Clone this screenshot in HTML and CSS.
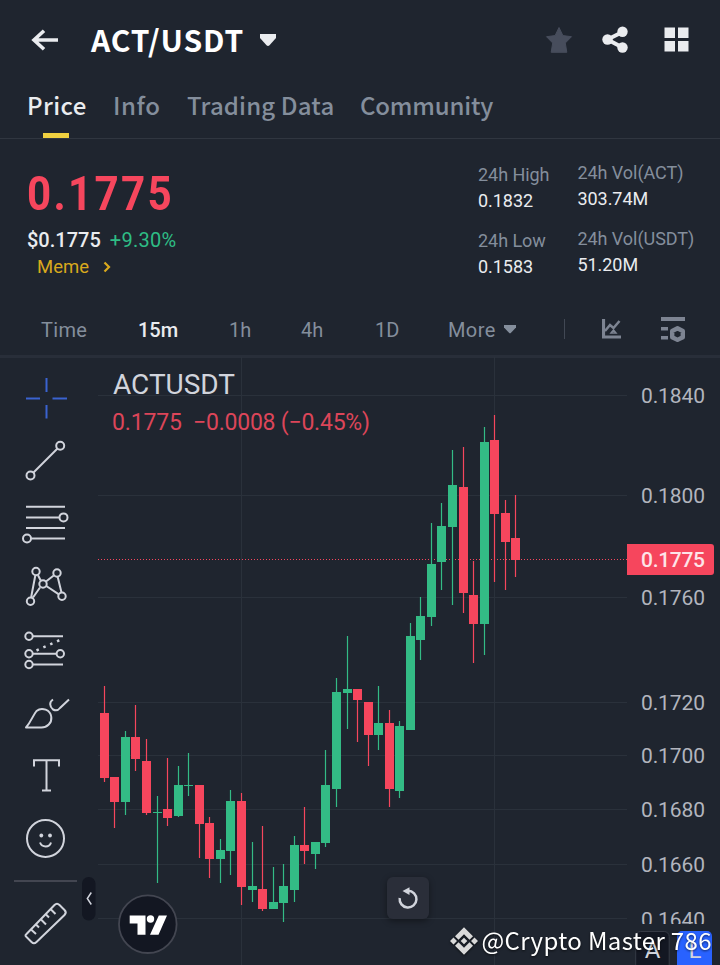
FILE: index.html
```html
<!DOCTYPE html>
<html lang="en">
<head>
<meta charset="utf-8">
<title>ACT/USDT</title>
<link rel="stylesheet" href="styles.css">
</head>
<body>
<div class="app">
  <header class="topbar">
    <svg class="back" width="28" height="24" viewBox="0 0 28 24"><path d="M27 12H3M13 2.800L3 12L13 21.200" fill="none" stroke="#eaecef" stroke-width="3.600"/></svg>
    <h1 class="pair">ACT/USDT</h1>
    <svg class="caret" width="16" height="13" viewBox="0 0 16 13"><path d="M0 0H16V4L9.500 11.300Q8 12.800 6.500 11.300L0 4Z" fill="#eaecef"/></svg>
    <div class="actions">
      <svg width="28" height="28" viewBox="0 0 28 28"><path d="M14 1.500L17.900 9.600L26.500 10.700L20.300 17L21.800 26.300H6.200L7.700 17L1.500 10.700L10.100 9.600Z" fill="#474d5c" stroke="#474d5c" stroke-linejoin="round"/></svg>
      <svg width="28" height="28" viewBox="0 0 28 28"><path d="M21.500 6L6.500 13.500L21.500 21.500" fill="none" stroke="#eaecef" stroke-width="4"/><circle cx="21.500" cy="5.800" r="5.200" fill="#eaecef"/><circle cx="6.500" cy="13.500" r="5.200" fill="#eaecef"/><circle cx="21.500" cy="21.500" r="5.200" fill="#eaecef"/></svg>
      <svg width="26" height="26" viewBox="0 0 26 26"><path d="M.5 .5h10.500v10.500H.5zM14 .5H24.500v10.500H14zM.5 14h10.500V24.500H.5zM14 14H24.500V24.500H14z" fill="#eaecef"/></svg>
    </div>
  </header>

  <nav class="tabs">
    <span class="tab tab-active">Price</span><span class="tab tab-info">Info</span><span class="tab tab-data">Trading Data</span><span class="tab tab-community">Community</span>
  </nav>

  <section class="summary">
    <div class="quote">
      <div class="last">0.1775</div>
      <div class="fiat"><span class="usd">$0.1775</span><span class="change">+9.30%</span></div>
      <div class="tag"><span>Meme</span><svg width="8" height="12" viewBox="0 0 8 12"><path d="M1.500 1.500L6 6L1.500 10.500" fill="none" stroke="#d9a91d" stroke-width="2.200"/></svg></div>
    </div>
    <div class="stats">
      <div class="stat-col stat-price">
        <div class="stat"><span class="label label-high">24h High</span><span class="value">0.1832</span></div>
        <div class="stat"><span class="label label-low">24h Low</span><span class="value">0.1583</span></div>
      </div>
      <div class="stat-col">
        <div class="stat"><span class="label label-act">24h Vol(ACT)</span><span class="value">303.74M</span></div>
        <div class="stat"><span class="label label-usdt">24h Vol(USDT)</span><span class="value">51.20M</span></div>
      </div>
    </div>
  </section>

  <div class="intervals">
    <span class="int int-time">Time</span><span class="int int-on">15m</span><span class="int int-1h">1h</span><span class="int int-4h">4h</span><span class="int int-1d">1D</span><span class="int int-more">More</span>
    <svg class="more-caret" width="12" height="9" viewBox="0 0 12 9"><path d="M0 0H12V2.500L7 7.700Q6 8.700 5 7.700L0 2.500Z" fill="#848e9c"/></svg>
    <i class="divider"></i>
    <svg class="indicator" width="20" height="20" viewBox="0 0 20 20"><g fill="none" stroke="#7d8492"><path d="M1.500 0V18H19" stroke-width="3.200"/><path d="M3 12L8 6L11.500 9L17.500 2" stroke-width="2.500"/><path d="M9 14L11.500 11L14 14Z" stroke-width="1.500"/></g></svg>
    <svg class="settings" width="26" height="26" viewBox="0 0 26 26"><path d="M1 1h24v4H1zM1 11h7v3.500H1zM1 20h7v3.500H1z" fill="#7d8492"/><path d="M17.500 12.300L22.800 15V21.200L17.500 23.900L12.200 21.200V15Z" fill="none" stroke="#7d8492" stroke-width="4.400" stroke-linejoin="round"/></svg>
  </div>

  <main class="chart">
    <svg class="tools" width="98" height="608" viewBox="0 357 98 608">
      <path d="M46.500 378V392M46.500 405V418.500M26 398.500H40M52.500 398.500H67" stroke="#3a63d0" stroke-width="2"/>
      <g fill="none" stroke="#d1d4dc" stroke-width="2">
        <path d="M33.500 472.500L57.500 448.500"/><circle cx="60.200" cy="445.700" r="4"/><circle cx="30.500" cy="475.500" r="4"/>
        <path d="M26 506.700H65M26 517.400H59M26 528H65M31 538.500H65"/><circle cx="63.500" cy="517.400" r="4"/><circle cx="27" cy="538.500" r="4"/>
        <path d="M35.300 575.500L31.200 597M38 575.200L40.700 580.500M46 581.500L53.700 575.500M57.700 577L61.500 592.500M46.300 586L58.500 594.200M40 587.500L33 597.500"/><circle cx="36" cy="571.500" r="3.700"/><circle cx="57" cy="573" r="3.700"/><circle cx="43" cy="584" r="3.700"/><circle cx="30.500" cy="601.300" r="3.700"/><circle cx="62" cy="596.300" r="3.700"/>
        <path d="M33 636.300H63M33 653.800H56M33 664.500H63"/><circle cx="29" cy="636.300" r="3.700"/><circle cx="29" cy="653.800" r="3.700"/><circle cx="60.300" cy="653.800" r="3.700"/><circle cx="29" cy="664.500" r="3.700"/>
        <path d="M36.500 650.500L61 639.500" stroke-width="2.500" stroke-dasharray="2.500 5"/>
        <path d="M26 727.500C31 722 32.500 716 36.500 711C42 706.500 50.500 710 51.300 717C52 723 47 727.500 41.500 727.500Z" stroke-linejoin="round"/><path d="M53 699.500C49 702 49.500 706.500 53 709.500C56.500 711.300 58.500 710 60 708L69 699.500"/>
        <path d="M34 766.500V760.300H59V766.500M46.500 760.300V790.500M42 790.500H51"/>
        <circle cx="45.500" cy="838.500" r="18.500"/><path d="M40 842.500C42 847.800 49.500 847.800 51 842.500"/>
        <path d="M26.500 934L54.500 905Q57 902.500 59.500 905L64.500 910Q67 912.500 64.500 915L36.500 942Q34 944.500 31.500 942L26.500 937Q24.500 935.500 26.500 934ZM31 929.500L36 934M36 924.500L39 927.500M41 919.500L46 924.500M46 914.500L49 917.500M51 909.500L55.500 914"/>
      </g>
      <circle cx="41.300" cy="835.500" r="1.900" fill="#d1d4dc"/><circle cx="50" cy="835.500" r="1.900" fill="#d1d4dc"/>
      <path d="M14 881H77" stroke="#434651" stroke-width="2"/>
      <rect x="82" y="877" width="13.500" height="43.500" rx="6.500" fill="#131722"/>
      <path d="M91.300 892.500L87.300 898.500L91.300 904.500" fill="none" stroke="#d1d4dc" stroke-width="1.500"/>
    </svg>
    <svg class="plot" width="622" height="608" viewBox="98 357 622 608">
      <path class="grid" d="M98 395.500H627M98 495.500H627M98 597.500H627M98 702.500H627M98 755.500H627M98 809.500H627M98 864.500H627M98 918.500H627M241.500 357V965M494.500 357V965"/>
      <path class="current" d="M98 559.500H627"/>
      <path class="wick up" d="M125.500 731V815M157.500 796V883M178.500 766V817M188.500 753V796M220.500 839V883M230.500 790V875M252.500 842V902M273.500 867V909M283.500 864V922M294.500 836V902M315.500 842V869M325.500 750V847M336.500 678V807M347.500 636V729M378.500 686V750M399.500 721V798M410.500 623V730M420.500 597V660M431.500 523V626M441.500 503V590M452.500 450V605M484.500 427V655"/>
      <path class="wick down" d="M104.500 686V782M114.500 777V828M135.500 705V771M146.500 739V815M167.500 758V826M199.500 785V858M209.500 817V878M241.500 793V905M262.500 826V911M304.500 807V864M357.500 689V742M368.500 702V766M389.500 710V807M463.500 447V613M473.500 561V663M494.500 415V582M505.500 500V590M515.500 495V577"/>
      <path class="body up" d="M125.500 737V802M157.500 812V813M178.500 785V816M188.500 785V786M220.500 850V859M230.500 801V851M252.500 886V890M273.500 902V909M283.500 886V903M294.500 845V890M315.500 842V854M325.500 785V843M336.500 692V789M347.500 689V693M378.500 723V735M399.500 726V791M410.500 636V730M420.500 616V640M431.500 564V617M441.500 526V562M452.500 485V527M484.500 442V624"/>
      <path class="body down" d="M104.500 713V778M114.500 777V802M135.500 737V759M146.500 761V813M167.500 809V818M199.500 785V824M209.500 823V859M241.500 801V887M262.500 889V909M304.500 845V851M357.500 689V700M368.500 702V735M389.500 723V789M463.500 487V593M473.500 595V624M494.500 440V514M505.500 513V542M515.500 538V560"/>
      <text class="symbol" x="113" y="394" textLength="122">ACTUSDT</text>
      <text class="delta" x="112" y="430" textLength="70">0.1775</text>
      <text class="delta" x="193" y="430" textLength="177">−0.0008 (−0.45%)</text>
      <g class="axis">
        <text x="641" y="403" textLength="64">0.1840</text>
        <text x="641" y="503" textLength="64">0.1800</text>
        <text x="641" y="605" textLength="64">0.1760</text>
        <text x="641" y="710" textLength="64">0.1720</text>
        <text x="641" y="763" textLength="64">0.1700</text>
        <text x="641" y="817" textLength="64">0.1680</text>
        <text x="641" y="872" textLength="64">0.1660</text>
        <text x="641" y="927" textLength="64">0.1640</text>
      </g>
      <rect x="628" y="924" width="92" height="41" fill="#1f252f"/>
      <path d="M627 544H711Q714 544 714 547V572Q714 575 711 575H627Z" fill="#f6465d"/>
      <text class="price-tag" x="641" y="567" textLength="64">0.1775</text>
      <circle cx="147.800" cy="924.200" r="28.800" fill="#131722" stroke="#434651" stroke-width="1.800"/>
      <path d="M129.700 915.500H145.500V934.800H137.500V923.500H129.700ZM158.800 915.500H167L158.500 934.800H150Z" fill="#fff"/><circle cx="150.500" cy="919" r="3.700" fill="#fff"/>
      <rect class="reset" x="387" y="877" width="42" height="42" rx="6"/>
      <path d="M399.700 898A8.400 8.400 0 1 0 408 890.700" fill="none" stroke="#d1d4dc" stroke-width="2.500"/><path d="M402.500 891L409.500 887.200V895Z" fill="#d1d4dc"/>
      <rect x="635.700" y="931.500" width="33.500" height="40" rx="5" fill="#131722" stroke="#363a45"/>
      <rect x="677" y="931" width="35" height="40" rx="5" fill="#2962ff"/>
      <text class="mode" x="652.500" y="958" text-anchor="middle">A</text>
      <text class="mode" x="695" y="958" text-anchor="middle">L</text>
      <g class="watermark">
        <path d="M464 927.300L473 936.300L469.500 939.800L464 934.300L458.500 939.800L455 936.300ZM455 945.700L458.500 942.200L464 947.700L469.500 942.200L473 945.700L464 954.700ZM464 937.700L467.300 941L464 944.300L460.700 941ZM453.500 937.500L457 941L453.500 944.500L450 941ZM474.500 937.500L478 941L474.500 944.500L471 941Z" fill="#d9d9d9"/>
        <text x="481.500" y="949.500" textLength="230">@Crypto Master 786</text>
      </g>
    </svg>
  </main>
</div>
</body>
</html>
```
FILE: styles.css
```css
* { box-sizing: border-box; }
body { margin: 0; background: #1f252f; color: #eaecef; font-family: Roboto, "Liberation Sans", sans-serif; }
.app { width: 720px; height: 965px; overflow: hidden; background: #1f252f; }
svg { display: block; flex: none; }
span { white-space: nowrap; }

.topbar { display: flex; align-items: center; height: 80px; padding: 0 30px 0 31px; }
.pair { width: 154px; margin: -2px 0 0 32px; font: 700 30px/40px "Noto Sans CJK SC", Roboto, sans-serif; color: #fff; letter-spacing: 0.9px; white-space: nowrap; }
.caret { margin-left: 15px; }
.actions { display: flex; align-items: center; gap: 28px; margin-left: auto; }
.actions svg:last-child { margin-left: 7px; }

.tabs { display: flex; height: 59px; padding-left: 27px; border-bottom: 1px solid #303640; font: 500 24px/49px "Noto Sans CJK SC", Roboto, sans-serif; color: #848e9c; }
.tab-active { position: relative; width: 86px; color: #eaecef; letter-spacing: 0.4px; }
.tab-active::after { content: ""; position: absolute; left: 16px; bottom: 0; width: 26px; height: 5px; background: #f0d040; }
.tab-info { width: 74px; letter-spacing: 0.6px; }
.tab-data { width: 173px; letter-spacing: 0.15px; }
.tab-community { letter-spacing: -0.2px; }

.summary { display: flex; justify-content: space-between; height: 164px; padding: 22px 27px 0; }
.last { width: 0; height: 66px; font-size: 49px; font-weight: 700; line-height: 66px; letter-spacing: 2.700px; color: #f6465d; transform: scaleX(0.86); transform-origin: left; }
.fiat { display: flex; gap: 9px; height: 27px; font-size: 20px; line-height: 27px; font-weight: 500; }
.change { color: #2ebd85; font-weight: 400; letter-spacing: 0.3px; }
.tag { display: flex; align-items: center; gap: 14px; height: 26px; padding-left: 10px; font-size: 18.500px; color: #d9a91d; }
.stats { display: flex; width: 215px; gap: 28px; margin-top: -1.500px; }
.stat-price { width: 73px; padding-top: 2px; }
.stat { display: flex; flex-direction: column; height: 66px; font-size: 18px; line-height: 26px; letter-spacing: -0.05px; }
.label { color: #848e9c; }

.intervals { display: flex; align-items: center; height: 55px; margin-bottom: -1px; padding-left: 41px; border-bottom: 3px solid #282e39; font-size: 20px; color: #848e9c; }
.int { padding-top: 1px; }
.int-time { width: 97px; letter-spacing: 0.3px; }
.int-on { width: 91px; color: #eaecef; font-weight: 500; }
.int-1h { width: 72px; }
.int-4h { width: 74px; }
.int-1d { width: 73px; }
.int-more { width: 56px; letter-spacing: 0.4px; }
.divider { width: 1px; height: 20px; margin-left: 48px; background: #414854; }
.indicator { margin-left: 37px; }
.settings { margin-left: 38px; }

.chart { display: flex; height: 608px; }
.plot text { font-family: Roboto, sans-serif; }
.grid { fill: none; stroke: #2a313b; stroke-width: 1; }
.current { stroke: #f6465d; stroke-width: 1; stroke-dasharray: 1 2; shape-rendering: crispEdges; }
.wick { stroke-width: 1.200; }
.body { stroke-width: 9; }
.up { stroke: #33bb85; }
.down { stroke: #f6465d; }
.symbol { font-size: 28px; fill: #d1d4dc; }
.delta { font-size: 23px; fill: #dc4559; }
.axis { font-size: 21px; fill: #b2b5be; }
.price-tag { font-size: 21px; font-weight: 500; fill: #fde4e8; }
.reset { fill: #2a2e39; filter: drop-shadow(0 2px 3px rgba(0, 0, 0, 0.4)); }
.mode { font-size: 24px; fill: #d1d4dc; }
.watermark text { font-family: "Noto Sans CJK SC", sans-serif; font-size: 24px; fill: #fff; }
.watermark { filter: drop-shadow(0 1px 1px rgba(0, 0, 0, 0.6)); }
```
